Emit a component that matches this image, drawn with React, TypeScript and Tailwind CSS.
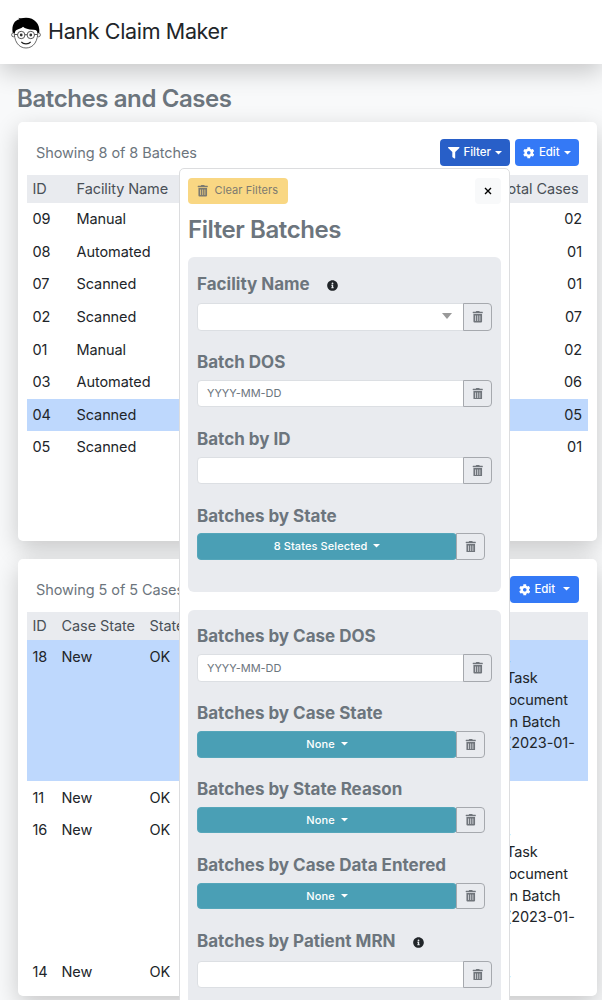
import type { ReactNode } from "react";
import clsx from "clsx";
import { FaCog, FaFilter, FaInfoCircle, FaTrashAlt } from "react-icons/fa";

type Batch = { id: string; facility: string; total: string };

const batches: Batch[] = [
  { id: "09", facility: "Manual", total: "02" },
  { id: "08", facility: "Automated", total: "01" },
  { id: "07", facility: "Scanned", total: "01" },
  { id: "02", facility: "Scanned", total: "07" },
  { id: "01", facility: "Manual", total: "02" },
  { id: "03", facility: "Automated", total: "06" },
  { id: "04", facility: "Scanned", total: "05" },
  { id: "05", facility: "Scanned", total: "01" },
];

const cases = [
  { id: "18", hasNote: true, height: "h-[141.3px]" },
  { id: "11", hasNote: false, height: "h-[32.6px]" },
  { id: "16", hasNote: true, height: "h-[141.3px]" },
  { id: "14", hasNote: false, height: "h-[32.6px]" },
];

function Caret() {
  return (
    <svg width="7" height="4" viewBox="0 0 7 4" fill="currentColor" className="shrink-0">
      <path d="M0 0H7L3.5 3.6Z" />
    </svg>
  );
}

function HankLogo() {
  return (
    <svg width="30" height="33" viewBox="0 0 30 33" fill="none" stroke="#444" className="shrink-0">
      <circle cx="2.6" cy="18.8" r="2" fill="#fff" strokeWidth="0.8" />
      <circle cx="27.4" cy="18.8" r="2" fill="#fff" strokeWidth="0.8" />
      <path d="M3.3 14C2.5 25 7.5 32 15 32S27.5 25 26.7 14C24 7 6 7 3.3 14Z" fill="#fff" strokeWidth="0.8" />
      <path
        d="M1.6 16.5C0.6 9 3.5 4.2 8.5 3.3L7.3 1.7C10 2.8 12 1.8 15 1.8C23.5 1.8 29.2 8 28.3 16.5L26.6 17.3C26.5 15 25.5 14 22.5 13.8C17 13.6 14 12.5 12 10.8C11 12.5 7.500 13 5.500 14C4.500 14.800 4 15.500 3.700 17.300Z"
        fill="#000"
        stroke="none"
      />
      <circle cx="10.2" cy="19" r="3.7" strokeWidth="0.9" />
      <circle cx="19.8" cy="19" r="3.7" strokeWidth="0.9" />
      <path d="M13.9 18.7H16.1M3.5 18.5H6.5M23.5 18.5H26.5" strokeWidth="0.9" />
      <circle cx="10.2" cy="19" r="1.4" fill="#333" stroke="none" />
      <circle cx="19.8" cy="19" r="1.4" fill="#333" stroke="none" />
      <path d="M10.3 25.8C12.3 28.5 17.7 28.5 19.7 25.8" stroke="#222" strokeWidth="1.1" />
    </svg>
  );
}

function Card({ className, children }: { className: string; children: ReactNode }) {
  return (
    <section
      className={clsx(
        "ml-[18px] w-[579px] rounded-[5px] bg-white px-[9px] shadow-[0_8px_24px_rgba(0,0,0,0.2)]",
        className
      )}
    >
      {children}
    </section>
  );
}

function TrashButton() {
  return (
    <button className="-ml-px flex w-[29px] shrink-0 items-center justify-center rounded-r-[4px] border border-[#a6a9ae] text-[#70757b]">
      <FaTrashAlt size={11.5} />
    </button>
  );
}

function Field({ label, info, children }: { label: string; info?: boolean; children: ReactNode }) {
  return (
    <div>
      <div
        className={clsx(
          "flex items-center pt-[2px] text-[17px] font-bold tracking-normal text-[#6c757d]",
          info ? "mb-[9px] h-[21px]" : "mb-2 h-5"
        )}
      >
        {label}
        {info && <FaInfoCircle size={11} className="mt-px ml-[17px] text-[#212529]" />}
      </div>
      {children}
    </div>
  );
}

function TextControl({ placeholder, select }: { placeholder?: string; select?: boolean }) {
  return (
    <div className="flex h-[27.7px]">
      <div className="flex w-[267px] items-center rounded-l-[4px] border border-[#dcdfe3] bg-white px-[9px] pt-px text-[11px] tracking-[-0.05px] text-[#6c757d]">
        {placeholder}
        {select && (
          <span className="mr-[2px] mb-[3px] ml-auto border-x-[5.5px] border-t-[6px] border-x-transparent border-t-[#999]" />
        )}
      </div>
      <TrashButton />
    </div>
  );
}

function DropdownControl({ text }: { text: string }) {
  return (
    <div className="flex h-[26.5px]">
      <button className="flex w-[260px] items-center justify-center rounded-[4px] border border-[#55a6ba] bg-[#4a9fb5] pt-px text-[11px] font-medium tracking-[0.1px] text-white">
        {text}
        <span className="mb-[2px] ml-[6px]">
          <Caret />
        </span>
      </button>
      <TrashButton />
    </div>
  );
}

function FilterMenu() {
  return (
    <div className="absolute top-[168px] left-[179px] h-[900px] w-[331px] rounded-[5px] border border-[#dcdddf] bg-white px-2 pt-[8.5px]">
      <div className="flex h-[26px] justify-between">
        <button className="flex w-[100px] items-center rounded-[4px] bg-[#f9d783] pt-px pl-[9px] text-[11px] tracking-[0.1px] text-[#7c7a70]">
          <FaTrashAlt size={11.5} className="mr-[6px]" />
          Clear Filters
        </button>
        <button className="flex w-[26px] items-center justify-center rounded-[4px] bg-[#f8f9fa] text-black">
          <svg width="8" height="8" viewBox="0 0 8 8" stroke="currentColor" strokeWidth="1.4">
            <path d="M1 1L7 7M7 1L1 7" />
          </svg>
        </button>
      </div>
      <h2 className="mt-[9px] h-[34px] text-[24px] leading-[34px] font-semibold tracking-[-0.42px] text-[#6c757d]">
        Filter Batches
      </h2>
      <div className="mt-[10.5px] flex h-[334.7px] flex-col gap-[21.1px] rounded-[6px] bg-[#e9ebef] px-[9px] pt-[16px]">
        <Field label="Facility Name" info>
          <TextControl select />
        </Field>
        <Field label="Batch DOS">
          <TextControl placeholder="YYYY-MM-DD" />
        </Field>
        <Field label="Batch by ID">
          <TextControl />
        </Field>
        <Field label="Batches by State">
          <DropdownControl text="8 States Selected" />
        </Field>
      </div>
      <div className="mt-[18px] flex h-[430px] flex-col gap-[21.3px] rounded-[6px] bg-[#e9ebef] px-[9px] pt-[16.5px]">
        <Field label="Batches by Case DOS">
          <TextControl placeholder="YYYY-MM-DD" />
        </Field>
        <Field label="Batches by Case State">
          <DropdownControl text="None" />
        </Field>
        <Field label="Batches by State Reason">
          <DropdownControl text="None" />
        </Field>
        <Field label="Batches by Case Data Entered">
          <DropdownControl text="None" />
        </Field>
        <Field label="Batches by Patient MRN" info>
          <TextControl />
        </Field>
      </div>
    </div>
  );
}

function CaseNote() {
  return (
    <div className="ml-auto flex w-[90px] flex-col whitespace-nowrap">
      <span className="pl-[9px]">,</span>
      <span className="pl-[8px]">Task</span>
      <span>Document</span>
      <span className="pl-[8px]">in Batch</span>
      <span className="pl-[8px]">(2023-01-</span>
    </div>
  );
}

export default function App() {
  return (
    <main className="relative h-[1000px] overflow-hidden bg-[#f8f9fa] font-['Inter',sans-serif] text-[14.5px] leading-[21.7px] tracking-[-0.08px] text-[#212529]">
      <header className="flex h-16 items-center bg-white pl-[11px] shadow-[0_8px_24px_rgba(0,0,0,0.2)]">
        <HankLogo />
        <span className="ml-[7px] text-[21.5px] tracking-[-0.35px]">Hank Claim Maker</span>
      </header>

      <h1 className="mt-[18px] ml-[17px] h-8 pt-px text-[24px] leading-8 font-semibold tracking-[-0.4px] text-[#6c757d]">
        Batches and Cases
      </h1>

      <Card className="mt-2 h-[418.5px]">
        <div className="flex h-[53px] items-center px-[9px] pt-[8px]">
          <span className="text-[#6c757d]">Showing 8 of 8 Batches</span>
          <button className="ml-auto flex h-[26.5px] w-[70px] items-center justify-center gap-1 rounded-[4px] bg-[#285fc8] pt-px text-[11.5px] font-medium text-white">
            <FaFilter size={11.5} />
            Filter
            <Caret />
          </button>
          <button className="ml-[5px] flex h-[26.5px] w-[64px] items-center justify-center gap-1 rounded-[4px] bg-[#3479f6] pt-px text-[11.5px] font-medium text-white">
            <FaCog size={11.5} />
            Edit
            <Caret />
          </button>
        </div>
        <div className="flex h-7 items-center bg-[#e9ebef] pr-[9.5px] pl-[5.5px] text-[#495057]">
          <span className="w-[44px]">ID</span>
          <span>Facility Name</span>
          <span className="ml-auto">Total Cases</span>
        </div>
        {batches.map((batch) => (
          <div
            key={batch.id}
            className={clsx(
              "flex h-[32.6px] items-center pr-[6px] pb-[0.6px] pl-[5.5px]",
              batch.id === "04" && "bg-[#bed8fd]"
            )}
          >
            <span className="w-[44px]">{batch.id}</span>
            <span>{batch.facility}</span>
            <span className="ml-auto">{batch.total}</span>
          </div>
        ))}
      </Card>

      <Card className="mt-[18.5px] h-[436.5px]">
        <div className="flex h-[53px] items-center px-[9px] pt-[8px]">
          <span className="text-[#6c757d]">Showing 5 of 5 Cases</span>
          <button className="ml-auto flex h-[26.5px] w-[69px] items-center justify-center gap-1 rounded-[4px] bg-[#3479f6] pt-px text-[11.5px] font-medium text-white">
            <FaCog size={11.5} />
            Edit
            <span className="mb-[2px] ml-[4px]">
              <Caret />
            </span>
          </button>
        </div>
        <div className="flex h-7 items-center bg-[#e9ebef] pl-[5.5px] text-[#495057]">
          <span className="w-[29px]">ID</span>
          <span className="w-[88px]">Case State</span>
          <span>State</span>
        </div>
        {cases.map((item) => (
          <div
            key={item.id}
            className={clsx("flex pt-[5.5px] pl-[5.5px]", item.height, item.id === "18" && "bg-[#bed8fd]")}
          >
            <span className="w-[29px]">{item.id}</span>
            <span className="w-[88px]">New</span>
            <span>OK</span>
            {item.hasNote && <CaseNote />}
            {item.id === "14" && <span className="ml-auto w-[81px]">,</span>}
          </div>
        ))}
      </Card>

      <FilterMenu />
    </main>
  );
}
